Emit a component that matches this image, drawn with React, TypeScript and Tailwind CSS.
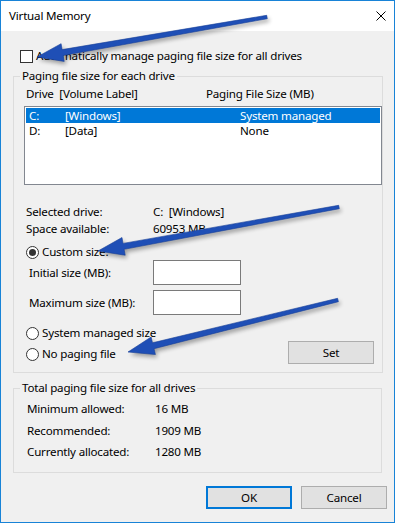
import React from 'react';

type Pt = [number, number];

// builds a tapered arrow polygon from tail to tip
const arrowPoints = (tail: Pt, tip: Pt, w0 = 3.5, w1 = 6, headLen = 26, headW = 18) => {
  const dx = tip[0] - tail[0];
  const dy = tip[1] - tail[1];
  const len = Math.hypot(dx, dy);
  const ux = dx / len;
  const uy = dy / len;
  const nx = -uy;
  const ny = ux;
  const bx = tip[0] - ux * headLen;
  const by = tip[1] - uy * headLen;
  const pts: Pt[] = [
    [tail[0] + (nx * w0) / 2, tail[1] + (ny * w0) / 2],
    [bx + (nx * w1) / 2, by + (ny * w1) / 2],
    [bx + (nx * headW) / 2, by + (ny * headW) / 2],
    tip,
    [bx - (nx * headW) / 2, by - (ny * headW) / 2],
    [bx - (nx * w1) / 2, by - (ny * w1) / 2],
    [tail[0] - (nx * w0) / 2, tail[1] - (ny * w0) / 2],
  ];
  return pts.map((p) => `${p[0].toFixed(1)},${p[1].toFixed(1)}`).join(' ');
};

const arrows: [Pt, Pt][] = [
  [[267, 17], [37, 57]],
  [[339, 207], [98, 251]],
  [[338, 300], [128, 352]],
];

const Arrows: React.FC = () => (
  <svg className="absolute left-0 top-0 pointer-events-none" width="396" height="523" viewBox="0 0 396 523">
    <defs>
      <filter id="shadow" x="-20%" y="-20%" width="140%" height="140%">
        <feGaussianBlur stdDeviation="2" />
      </filter>
    </defs>
    {arrows.map(([a, b], i) => (
      <g key={i}>
        <polygon
          points={arrowPoints([a[0] + 2, a[1] + 3], [b[0] + 2, b[1] + 3])}
          fill="#000"
          opacity="0.35"
          filter="url(#shadow)"
        />
        <polygon points={arrowPoints(a, b)} fill="#1f4fb6" stroke="#173f98" strokeWidth="0.6" />
      </g>
    ))}
  </svg>
);

const Checkbox: React.FC = () => <span className="block w-[13px] h-[13px] border border-[#333333] bg-white" />;

const Radio: React.FC<{ checked?: boolean }> = ({ checked }) => (
  <span className="flex items-center justify-center w-[13px] h-[13px] rounded-full border border-[#333333] bg-white">
    {checked && <span className="block w-[7px] h-[7px] rounded-full bg-[#333333]" />}
  </span>
);

const Input: React.FC = () => <div className="w-[88px] h-[25px] border border-[#7a7a7a] bg-white" />;

const Button: React.FC<{ label: string; primary?: boolean }> = ({ label, primary }) => (
  <div
    className={
      primary
        ? 'flex items-center justify-center w-[86px] h-[23px] border-2 border-[#0078d7] bg-[#e1e1e1]'
        : 'flex items-center justify-center w-[86px] h-[23px] border border-[#adadad] bg-[#e1e1e1]'
    }
  >
    {label}
  </div>
);

const drives = [
  { letter: 'C:', label: '[Windows]', size: 'System managed', selected: true },
  { letter: 'D:', label: '[Data]', size: 'None', selected: false },
];

const totals = [
  { label: 'Minimum allowed:', value: '16 MB', mt: 'mt-[5px]' },
  { label: 'Recommended:', value: '1909 MB', mt: 'mt-[6px]' },
  { label: 'Currently allocated:', value: '1280 MB', mt: 'mt-[5px]' },
];

export default function App() {
  return (
    <div className="relative w-[396px] h-[523px] bg-white font-['Noto_Sans','Liberation_Sans',sans-serif] text-[11.6px] leading-[16px] tracking-[-0.2px] text-black">
      <div className="flex flex-col w-[395px] h-[523px] border border-[#1883d7] bg-[#f0f0f0]">
        {/* title bar */}
        <div className="flex items-center justify-between h-[30px] bg-white pl-[8px] pr-[8px]">
          <span>Virtual Memory</span>
          <svg width="10" height="10" viewBox="0 0 10 10">
            <path d="M0.5 0.5 L9.5 9.5 M9.5 0.5 L0.5 9.5" stroke="#000" strokeWidth="1" />
          </svg>
        </div>

        <div className="flex items-center gap-[3px] h-[16px] mt-[17px] pl-[19px]">
          <Checkbox />
          <span>Automatically manage paging file size for all drives</span>
        </div>

        {/* paging file size for each drive */}
        <fieldset className="mx-[12px] mt-[4px] pb-[8px] border border-[#dcdcdc]">
          <legend className="ml-[6px] px-[2px] h-[16px]">Paging file size for each drive</legend>
          <div className="flex h-[16px] mt-[2px] pl-[12px]">
            <span className="w-[180px] whitespace-pre">Drive  [Volume Label]</span>
            <span>Paging File Size (MB)</span>
          </div>
          <div className="w-[358px] h-[79px] mt-[4px] ml-[10px] p-[1px] border border-[#828790] bg-white">
            {drives.map((d) => (
              <div
                key={d.letter}
                className={
                  d.selected
                    ? 'flex items-center h-[15px] leading-[15px] pl-[3px] bg-[#0078d7] text-white'
                    : 'flex items-center h-[15px] leading-[15px] pl-[3px]'
                }
              >
                <span className="w-[36px]">{d.letter}</span>
                <span className="w-[175px]">{d.label}</span>
                <span>{d.size}</span>
              </div>
            ))}
          </div>

          <div className="flex items-center h-[17px] mt-[18px] pl-[12px]">
            <span className="w-[127px]">Selected drive:</span>
            <span className="whitespace-pre">C:  [Windows]</span>
          </div>
          <div className="flex items-center h-[17px] pl-[12px]">
            <span className="w-[127px]">Space available:</span>
            <span>60953 MB</span>
          </div>

          <div className="flex items-center gap-[3px] h-[16px] mt-[7px] pl-[12px]">
            <Radio checked />
            <span>Custom size:</span>
          </div>
          <div className="flex items-center pl-[15px]">
            <span className="w-[124px]">Initial size (MB):</span>
            <Input />
          </div>
          <div className="flex items-center mt-[5px] pl-[15px]">
            <span className="w-[124px]">Maximum size (MB):</span>
            <Input />
          </div>

          <div className="flex items-start mt-[10px]">
            <div className="flex flex-col gap-[5px] pl-[12px]">
              <div className="flex items-center gap-[3px] h-[16px]">
                <Radio />
                <span>System managed size</span>
              </div>
              <div className="flex items-center gap-[3px] h-[16px]">
                <Radio />
                <span>No paging file</span>
              </div>
            </div>
            <div className="ml-auto mr-[8px] mt-[16px]">
              <Button label="Set" />
            </div>
          </div>
        </fieldset>

        {/* totals */}
        <fieldset className="mx-[12px] mt-[7px] pb-[12px] border border-[#dcdcdc]">
          <legend className="ml-[6px] px-[2px] h-[16px]">Total paging file size for all drives</legend>
          {totals.map((t) => (
            <div key={t.label} className={`flex items-center h-[16px] pl-[13px] ${t.mt}`}>
              <span className="w-[128px]">{t.label}</span>
              <span>{t.value}</span>
            </div>
          ))}
        </fieldset>

        <div className="flex justify-end gap-[9px] mt-[13px] pr-[7px]">
          <Button label="OK" primary />
          <Button label="Cancel" />
        </div>
      </div>
      <Arrows />
    </div>
  );
}
